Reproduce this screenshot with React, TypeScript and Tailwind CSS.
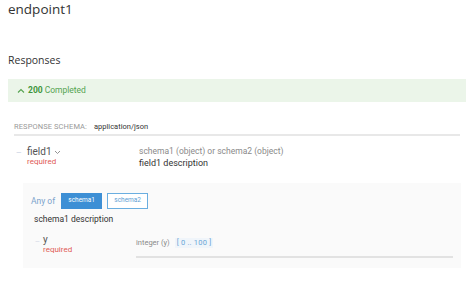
import React from "react";

export default function App() {
  return (
    <div className="w-[474px] h-[283px] bg-white overflow-hidden px-[8px]" style={{ fontFamily: "Roboto, 'Liberation Sans', sans-serif" }}>
      <h1 className="text-[13.5px] leading-[18px] pt-[0px] text-[#333]" style={{ fontFamily: "'Open Sans', 'Noto Sans', sans-serif" }}>
        endpoint1
      </h1>
      <h3 className="mt-[35px] text-[10.5px] leading-[14px] text-[#333]" style={{ fontFamily: "'Open Sans', 'Noto Sans', sans-serif" }}>
        Responses
      </h3>
      <div className="mt-[12px] h-[23px] bg-[#ebf5e9] flex items-center px-[9px] text-[8.5px] text-[#55a351]">
        <svg width="8" height="6" viewBox="0 0 8 6" className="mr-[3px]">
          <path d="M1 4.5 L4 1.5 L7 4.5" fill="none" stroke="#55a351" strokeWidth="1.1" />
        </svg>
        <span className="font-bold mr-[2px] text-[#3f953c]">200</span>
        <span>Completed</span>
      </div>
      <div className="mt-[18px] mx-[6px] border-b-[2px] border-[#e8e8e8] flex items-center pb-[1px] h-[13px] box-content">
        <span className="text-[7.5px] text-[#999] tracking-[0.1px] uppercase mr-[7px]">Response Schema:</span>
        <span className="text-[7.5px] text-[#333]">application/json</span>
      </div>
      <div className="flex mx-[6px] mt-[10px]">
        <div className="w-[125px] flex">
          <span className="text-[#c5cde0] text-[7px] w-[13px] pl-[2px] leading-[15px]">—</span>
          <div className="flex flex-col">
            <span className="text-[10px] leading-[11px] text-[#555] flex items-center">
              field1
              <svg width="7" height="5" viewBox="0 0 7 5" className="ml-[2px] mt-[2px]">
                <path d="M1 1 L3.5 3.5 L6 1" fill="none" stroke="#888" strokeWidth="0.9" />
              </svg>
            </span>
            <span className="text-[8px] leading-[9px] text-[#e05a56]">required</span>
          </div>
        </div>
        <div className="flex flex-col">
          <span className="text-[8.5px] leading-[11px] text-[#8a8a8a]">schema1 (object) or schema2 (object)</span>
          <span className="text-[9px] leading-[12px] text-[#333] mt-[0px]">field1 description</span>
        </div>
      </div>
      <div className="mt-[14px] ml-[15px] mr-[5px] bg-[#fafafa] h-[85px] pt-[10px] pl-[8px] pr-[8px]">
        <div className="flex items-center">
          <span className="text-[8.5px] text-[#7aa3cc] mr-[6px]">Any of</span>
          <span className="h-[16px] w-[41px] bg-[#3d8fd5] text-white text-[6.5px] flex items-center justify-center">schema1</span>
          <span className="ml-[5px] h-[16px] w-[41px] border border-[#6aaee0] bg-white text-[#5c9ed4] text-[6.5px] flex items-center justify-center">schema2</span>
        </div>
        <div className="text-[8.5px] leading-[12px] text-[#333] mt-[4px] pl-[3px]">schema1 description</div>
        <div className="flex mt-[10px]">
          <div className="w-[105px] flex pl-[4px]">
            <span className="text-[#c5cde0] text-[6px] w-[8px] leading-[11px]">—</span>
            <div className="flex flex-col">
              <span className="text-[10px] leading-[10px] text-[#555]">y</span>
              <span className="text-[8px] leading-[9px] text-[#e05a56]">required</span>
            </div>
          </div>
          <div className="flex-1 border-b-[2px] border-[#e2e2e2] h-[18px] pt-[3px] flex items-start box-content">
            <span className="text-[7.5px] leading-[10px] text-[#8a8a8a] mr-[5px]">integer (y)</span>
            <span className="text-[7.5px] leading-[10px] text-[#6aa5d6] bg-[#f0f5fa] px-[2px] tracking-[0.2px]">[ 0 .. 100 ]</span>
          </div>
        </div>
      </div>
    </div>
  );
}
